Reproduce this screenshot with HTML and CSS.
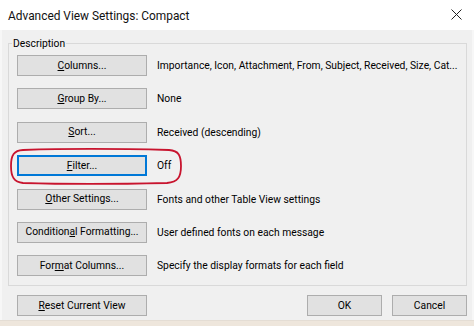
FILE: index.html
```html
<!DOCTYPE html>
<html>
<head>
<meta charset="utf-8">
<link rel="stylesheet" href="styles.css">
</head>
<body>
<div class="window">
  <div class="titlebar">
    <span class="title">Advanced View Settings: Compact</span>
    <svg class="close" width="11" height="11" viewBox="0 0 11 11"><path d="M0.5 0.5 L10.5 10.5 M10.5 0.5 L0.5 10.5" stroke="#222" stroke-width="1" fill="none"/></svg>
  </div>
  <div class="body">
    <fieldset class="group">
      <legend>Description</legend>
      <div class="row"><button class="btn"><u>C</u>olumns...</button><span class="desc">Importance, Icon, Attachment, From, Subject, Received, Size, Cat...</span></div>
      <div class="row"><button class="btn"><u>G</u>roup By...</button><span class="desc">None</span></div>
      <div class="row"><button class="btn"><u>S</u>ort...</button><span class="desc">Received (descending)</span></div>
      <div class="row"><button class="btn focus"><u>F</u>ilter...</button><span class="desc">Off</span></div>
      <div class="row"><button class="btn"><u>O</u>ther Settings...</button><span class="desc">Fonts and other Table View settings</span></div>
      <div class="row"><button class="btn">Condition<u>a</u>l Formatting...</button><span class="desc">User defined fonts on each message</span></div>
      <div class="row"><button class="btn">For<u>m</u>at Columns...</button><span class="desc">Specify the display formats for each field</span></div>
    </fieldset>
    <div class="footer">
      <button class="btn"><u>R</u>eset Current View</button>
      <div class="actions">
        <button class="btn small">OK</button>
        <button class="btn small">Cancel</button>
      </div>
    </div>
    <svg class="annot" width="174" height="37" viewBox="0 0 174 37"><path d="M14 2 C60 0.5 120 1 160 2 C170 2.5 172 8 172 18 C172 29 169 34 158 35 C110 36 50 36 14 35 C5 34 2 29 2 18 C2 7 5 2.5 14 2 Z" fill="none" stroke="#c8142e" stroke-width="1.8"/></svg>
  </div>
  <div class="edge"></div>
</div>
</body>
</html>
```
FILE: styles.css
```css
* { box-sizing: border-box; }
html, body { margin: 0; padding: 0; }
body {
  width: 474px;
  height: 326px;
  overflow: hidden;
  font-family: Roboto, "Noto Sans", sans-serif;
  font-size: 10.3px;
  color: #000;
  background: #f0f0f0;
}
.window {
  width: 474px;
  height: 326px;
  display: flex;
  flex-direction: column;
}
.titlebar {
  height: 30px;
  background: #ffffff;
  display: flex;
  align-items: center;
  justify-content: space-between;
  padding: 0 12px 0 8px;
}
.title {
  font-size: 11.9px;
  color: #111;
  margin-top: 1px;
}
.close { display: block; margin-top: -1px; }
.body {
  position: relative;
  flex: 1;
  background: #f0f0f0;
  border-left: 2px solid #f7f7f7;
  border-right: 2px solid #f7f7f7;
  padding: 6px 5px 0 6px;
}
.group {
  margin: 0;
  border: 1px solid #d9d9d9;
  padding: 4px 8px 9px 8px;
  display: flex;
  flex-direction: column;
  gap: 12.4px;
}
.group legend {
  padding: 0 1px;
  margin-left: -5px;
  font-size: 10.3px;
  line-height: 15px;
}
.row {
  display: flex;
  align-items: center;
  gap: 10px;
}
.btn {
  font-family: inherit;
  font-size: 10.3px;
  color: #000;
  background: #e1e1e1;
  border: 1px solid #adadad;
  width: 130px;
  height: 21px;
  padding: 0;
  line-height: 18px;
  text-align: center;
  white-space: nowrap;
  flex: none;
}
.btn.focus {
  border: 2px solid #0078d7;
  line-height: 16px;
}
.btn.small { width: 75px; }
.desc {
  white-space: nowrap;
}
.footer {
  display: flex;
  justify-content: space-between;
  padding: 9px 0 0 9px;
}
.actions {
  display: flex;
  gap: 10px;
}
.annot {
  position: absolute;
  left: 7px;
  top: 118px;
}
.edge {
  height: 6px;
  background: #eee6dc;
  border-top: 1px solid #e4ddd4;
}
```
